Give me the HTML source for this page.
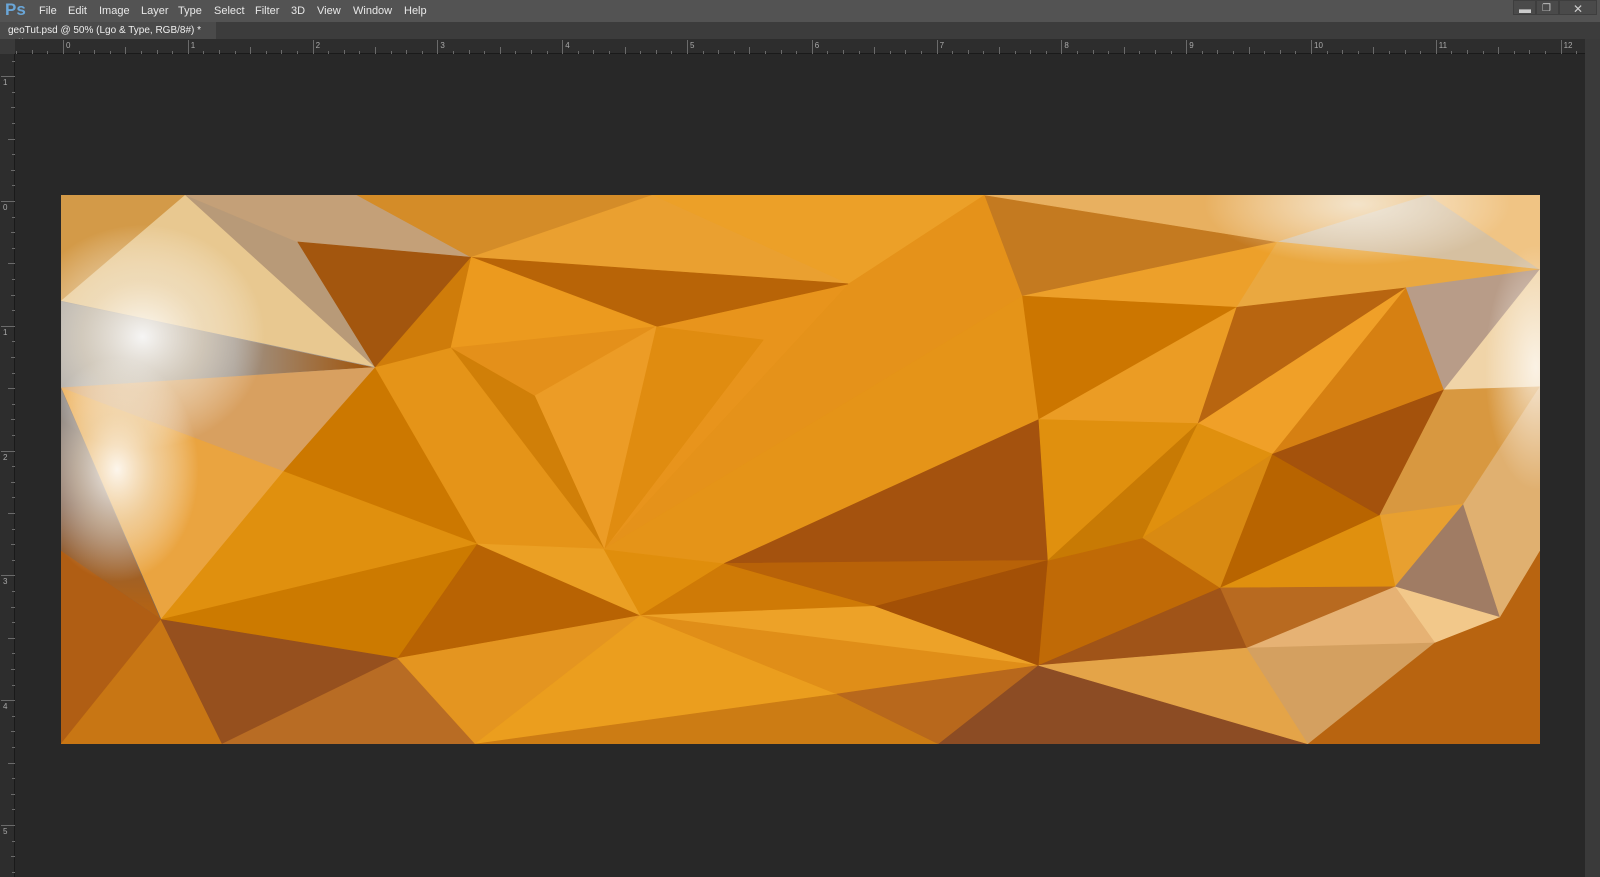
<!DOCTYPE html>
<html><head><meta charset="utf-8"><style>
*{margin:0;padding:0;box-sizing:border-box}
body{width:1600px;height:877px;background:#282828;overflow:hidden;position:relative;font-family:"Liberation Sans",sans-serif}
#menu{position:absolute;left:0;top:0;width:1600px;height:22px;background:#535353}
#menu span{position:absolute;top:5px;font-size:11px;color:#e8e8e8}
#menu #ps{position:absolute;left:5px;top:0px;font-size:17px;font-weight:bold;color:#6aa6d8}
#tabs{position:absolute;left:0;top:22px;width:1600px;height:17px;background:#3c3c3c}
#tab{position:absolute;left:0;top:22px;width:216px;height:17px;background:#4a4a4a;font-size:10px;color:#eee;padding:3px 0 0 8px}
#hr{position:absolute;left:15px;top:39px;width:1570px;height:15px;background:#2d2d2d;border-bottom:1px solid #1a1a1a}
#vr{position:absolute;left:0;top:54px;width:15px;height:823px;background:#2d2d2d;border-right:1px solid #1a1a1a}
#corner{position:absolute;left:0;top:39px;width:15px;height:15px;background:#3a3a3a}
#sb{position:absolute;left:1585px;top:39px;width:15px;height:838px;background:#3a3a3a}
.t{position:absolute;background:#6a6a6a}
.l{position:absolute;font-size:8px;color:#aaa}
.wb{position:absolute;top:0;height:15px;background:#4a4a4a;border:1px solid #3e3e3e}
</style></head><body>
<div id="menu">
<span id="ps">Ps</span>
<span style="left:39px">File</span><span style="left:68px">Edit</span><span style="left:99px">Image</span><span style="left:141px">Layer</span><span style="left:178px">Type</span><span style="left:214px">Select</span><span style="left:255px">Filter</span><span style="left:291px">3D</span><span style="left:317px">View</span><span style="left:353px">Window</span><span style="left:404px">Help</span>
<div class="wb" style="left:1513px;width:23px"></div><div class="wb" style="left:1536px;width:23px"></div><div class="wb" style="left:1559px;width:38px"></div>
<span style="left:1519px;top:2px;font-size:12px;color:#ccc">▬</span><span style="left:1542px;top:3px;font-size:10px;color:#ccc">❐</span><span style="left:1573px;top:2px;font-size:12px;color:#ccc">✕</span>
</div>
<div id="tabs"></div>
<div id="tab">geoTut.psd @ 50% (Lgo &amp; Type, RGB/8#) * <span style="margin-left:10px;color:#bbb">×</span></div>
<div id="corner"></div>
<div id="hr"></div><div id="vr"></div><div id="sb"></div>
<svg style="position:absolute;left:61px;top:195px" width="1479" height="549" viewBox="60 191 1449 538" preserveAspectRatio="none">
<defs>
<radialGradient id="g1"><stop offset="0" stop-color="#fff" stop-opacity=".9"/><stop offset=".5" stop-color="#f4ead8" stop-opacity=".55"/><stop offset="1" stop-color="#fff" stop-opacity="0"/></radialGradient>
<radialGradient id="g2"><stop offset="0" stop-color="#f6f0e4" stop-opacity=".8"/><stop offset="1" stop-color="#fff" stop-opacity="0"/></radialGradient>
<radialGradient id="g3"><stop offset="0" stop-color="#fff" stop-opacity=".7"/><stop offset="1" stop-color="#fff" stop-opacity="0"/></radialGradient>
<linearGradient id="gr" x1="0" x2="1"><stop offset="0" stop-color="#a8a39c"/><stop offset=".55" stop-color="#a0968c"/><stop offset="1" stop-color="#a05206"/></linearGradient>
<linearGradient id="gs" x1="0" y1="0" x2="0" y2="1"><stop offset="0" stop-color="#7c7a78"/><stop offset=".5" stop-color="#7a5a48"/><stop offset="1" stop-color="#b86410"/></linearGradient>
</defs>
<rect x="60" y="191" width="1449" height="538" fill="#e8941c"/>
<g stroke-width=".6" stroke-linejoin="round">
<polygon points="60,191 182,191 60,295" fill="#d39a48" stroke="#d39a48"/>
<polygon points="182,191 60,295 368,360" fill="#e8c890" stroke="#e8c890"/>
<polygon points="182,191 292,237 368,360" fill="#b89a78" stroke="#b89a78"/>
<polygon points="182,191 350,191 462,252 292,237" fill="#c4a078" stroke="#c4a078"/>
<polygon points="350,191 640,191 462,252" fill="#d48c28" stroke="#d48c28"/>
<polygon points="292,237 462,252 368,360" fill="#a3560e" stroke="#a3560e"/>
<polygon points="462,252 442,341 368,360" fill="#cf7c0a" stroke="#cf7c0a"/>
<polygon points="462,252 640,191 832,278" fill="#eaa030" stroke="#eaa030"/>
<polygon points="462,252 832,278 643,320" fill="#b86407" stroke="#b86407"/>
<polygon points="462,252 643,320 442,341" fill="#ec9a1e" stroke="#ec9a1e"/>
<polygon points="640,191 965,191 832,278" fill="#eca028" stroke="#eca028"/>
<polygon points="832,278 965,191 1002,290 592,538" fill="#e5921a" stroke="#e5921a"/>
<polygon points="643,320 748,333 592,538" fill="#e08c10" stroke="#e08c10"/>
<polygon points="442,341 643,320 524,388" fill="#e4901a" stroke="#e4901a"/>
<polygon points="524,388 643,320 592,538" fill="#ec9c26" stroke="#ec9c26"/>
<polygon points="442,341 524,388 592,538" fill="#d07f08" stroke="#d07f08"/>
<polygon points="60,295 368,360 60,380" fill="url(#gr)" stroke="#a09890"/>
<polygon points="60,380 368,360 278,462" fill="#d8a060" stroke="#d8a060"/>
<polygon points="368,360 468,533 278,462" fill="#cc7800" stroke="#cc7800"/>
<polygon points="60,380 278,462 158,607" fill="#eaa440" stroke="#eaa440"/>
<polygon points="368,360 442,341 592,538 468,533" fill="#e59418" stroke="#e59418"/>
<polygon points="60,380 158,607 60,540" fill="url(#gs)" stroke="#7c6a5c"/>
<polygon points="278,462 468,533 158,607" fill="#e0900e" stroke="#e0900e"/>
<polygon points="158,607 468,533 390,645" fill="#cc7a00" stroke="#cc7a00"/>
<polygon points="468,533 628,603 390,645" fill="#b86303" stroke="#b86303"/>
<polygon points="468,533 592,538 628,603" fill="#eba024" stroke="#eba024"/>
<polygon points="60,540 158,607 60,729" fill="#b05e14" stroke="#b05e14"/>
<polygon points="158,607 218,729 60,729" fill="#c87614" stroke="#c87614"/>
<polygon points="158,607 390,645 218,729" fill="#96501e" stroke="#96501e"/>
<polygon points="218,729 390,645 466,729" fill="#b86c24" stroke="#b86c24"/>
<polygon points="390,645 628,603 466,729" fill="#e49520" stroke="#e49520"/>
<polygon points="628,603 820,680 466,729" fill="#eb9e1e" stroke="#eb9e1e"/>
<polygon points="466,729 820,680 920,729" fill="#cc7c14" stroke="#cc7c14"/>
<polygon points="592,538 710,552 628,603" fill="#e08e0c" stroke="#e08e0c"/>
<polygon points="710,552 858,594 628,603" fill="#cf7a06" stroke="#cf7a06"/>
<polygon points="628,603 858,594 1018,652" fill="#eda228" stroke="#eda228"/>
<polygon points="628,603 1018,652 820,680" fill="#e08e18" stroke="#e08e18"/>
<polygon points="820,680 1018,652 920,729" fill="#b8681c" stroke="#b8681c"/>
<polygon points="920,729 1018,652 1282,729" fill="#8c4c24" stroke="#8c4c24"/>
<polygon points="592,538 1002,290 1018,411 710,552" fill="#e59418" stroke="#e59418"/>
<polygon points="710,552 1018,411 1027,549" fill="#a4520e" stroke="#a4520e"/>
<polygon points="710,552 1027,549 858,594" fill="#b86208" stroke="#b86208"/>
<polygon points="858,594 1027,549 1018,652" fill="#a35006" stroke="#a35006"/>
<polygon points="1027,549 1120,527 1196,576 1018,652" fill="#c06a06" stroke="#c06a06"/>
<polygon points="1018,652 1196,576 1222,635" fill="#a05418" stroke="#a05418"/>
<polygon points="1018,652 1222,635 1282,729" fill="#e4a448" stroke="#e4a448"/>
<polygon points="965,191 1252,237 1002,290" fill="#c47a20" stroke="#c47a20"/>
<polygon points="1002,290 1252,237 1212,301" fill="#eda02a" stroke="#eda02a"/>
<polygon points="1002,290 1212,301 1018,411" fill="#cc7600" stroke="#cc7600"/>
<polygon points="1018,411 1212,301 1174,415" fill="#eb9c24" stroke="#eb9c24"/>
<polygon points="1018,411 1174,415 1027,549" fill="#e0900e" stroke="#e0900e"/>
<polygon points="1027,549 1174,415 1120,527" fill="#c87a04" stroke="#c87a04"/>
<polygon points="965,191 1400,191 1252,237" fill="#e8b060" stroke="#e8b060"/>
<polygon points="1252,237 1400,191 1509,264" fill="#d6c0a0" stroke="#d6c0a0"/>
<polygon points="1400,191 1509,191 1509,264" fill="#f0c484" stroke="#f0c484"/>
<polygon points="1252,237 1509,264 1378,282 1212,301" fill="#eaa840" stroke="#eaa840"/>
<polygon points="1212,301 1378,282 1174,415" fill="#b86510" stroke="#b86510"/>
<polygon points="1174,415 1378,282 1247,445" fill="#f0a028" stroke="#f0a028"/>
<polygon points="1378,282 1415,382 1247,445" fill="#d68012" stroke="#d68012"/>
<polygon points="1378,282 1509,264 1415,382" fill="#b89c88" stroke="#b89c88"/>
<polygon points="1509,264 1509,379 1415,382" fill="#f0d4a8" stroke="#f0d4a8"/>
<polygon points="1174,415 1247,445 1120,527" fill="#e0900e" stroke="#e0900e"/>
<polygon points="1247,445 1196,576 1120,527" fill="#d98a12" stroke="#d98a12"/>
<polygon points="1247,445 1352,505 1196,576" fill="#b86400" stroke="#b86400"/>
<polygon points="1247,445 1415,382 1352,505" fill="#a4520c" stroke="#a4520c"/>
<polygon points="1415,382 1509,379 1434,494 1352,505" fill="#d89840" stroke="#d89840"/>
<polygon points="1352,505 1434,494 1367,575" fill="#e8a030" stroke="#e8a030"/>
<polygon points="1196,576 1352,505 1367,575" fill="#e0900e" stroke="#e0900e"/>
<polygon points="1434,494 1470,605 1367,575" fill="#a07c64" stroke="#a07c64"/>
<polygon points="1434,494 1509,379 1509,540 1470,605" fill="#e0b070" stroke="#e0b070"/>
<polygon points="1367,575 1470,605 1406,630" fill="#f2c88a" stroke="#f2c88a"/>
<polygon points="1196,576 1367,575 1222,635" fill="#b86a20" stroke="#b86a20"/>
<polygon points="1222,635 1367,575 1406,630" fill="#e6b274" stroke="#e6b274"/>
<polygon points="1222,635 1406,630 1282,729" fill="#d4a060" stroke="#d4a060"/>
<polygon points="1406,630 1470,605 1509,540 1509,729 1282,729" fill="#b86410" stroke="#b86410"/>
</g>
<ellipse cx="140" cy="330" rx="120" ry="110" fill="url(#g1)"/>
<ellipse cx="115" cy="460" rx="80" ry="110" fill="url(#g1)"/>
<ellipse cx="1330" cy="200" rx="150" ry="60" fill="url(#g2)"/>
<ellipse cx="1505" cy="360" rx="50" ry="120" fill="url(#g3)"/>
</svg>
<div id="rulers"></div>
<script>
var r=document.getElementById('rulers'),h='';
var s=124.8,x0=63,y0=201;
for(var i=-1;i<=13;i++){for(var j=0;j<8;j++){var x=x0+i*s+j*s/8;if(x<16||x>1584)continue;var len=j==0?14:(j==4?7:(j%2?3:4));h+='<div class="t" style="left:'+x.toFixed(1)+'px;top:'+(54-len)+'px;width:1px;height:'+len+'px"></div>';}
 if(i>=0&&i<=12)h+='<div class="l" style="left:'+(x0+i*s+3)+'px;top:41px">'+i+'</div>';}
for(var i=-2;i<=6;i++){for(var j=0;j<8;j++){var y=y0+i*s+j*s/8;if(y<55||y>877)continue;var len=j==0?14:(j==4?7:(j%2?3:4));h+='<div class="t" style="top:'+y.toFixed(1)+'px;left:'+(15-len)+'px;height:1px;width:'+len+'px"></div>';}
 if(i>=-1&&i<=5)h+='<div class="l" style="top:'+(y0+i*s+2)+'px;left:3px">'+Math.abs(i)+'</div>';}
r.innerHTML=h;
</script>
</body></html>
